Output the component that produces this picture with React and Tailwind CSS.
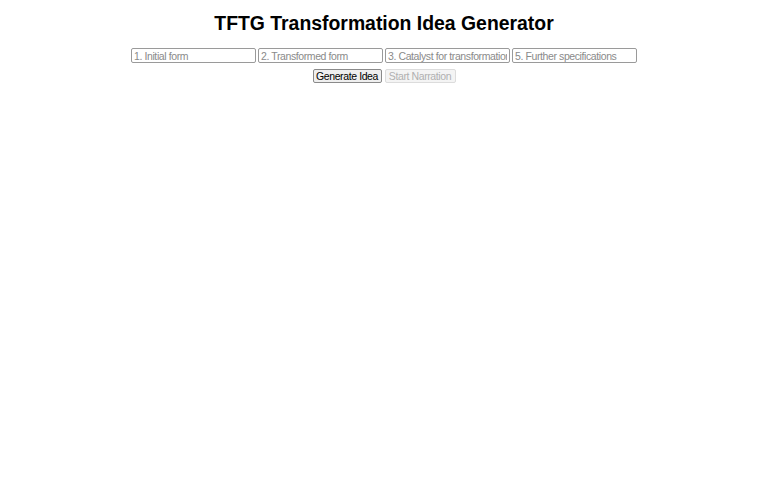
export default function App() {
  const fields = [
    "1. Initial form",
    "2. Transformed form",
    "3. Catalyst for transformation",
    "5. Further specifications",
  ];
  return (
    <div className="min-h-screen bg-white font-['Liberation_Sans',Arial,sans-serif] text-black">
      <h1 className="pt-[12px] text-center text-[19.4px] font-bold leading-[23px]">
        TFTG Transformation Idea Generator
      </h1>
      <div className="mt-[13px] flex justify-center gap-[2px]">
        {fields.map((f) => (
          <input
            key={f}
            placeholder={f}
            className="h-[15px] w-[125px] rounded-[2px] border border-[#9a9a9a] bg-white px-[2px] text-[10.5px] leading-[13px] tracking-[-0.4px] outline-none placeholder:text-[#8a8a8a]"
          />
        ))}
      </div>
      <div className="mt-[6px] flex justify-center gap-[3px]">
        <button className="h-[14px] w-[69px] whitespace-nowrap rounded-[2px] border border-[#8a8a8a] bg-[#efefef] px-0 text-[10.5px] leading-[12px] tracking-[-0.4px] text-black">
          Generate Idea
        </button>
        <button
          disabled
          className="h-[14px] w-[71px] whitespace-nowrap rounded-[2px] border border-[#dcdcdc] bg-[#f4f4f4] px-0 text-[10.5px] leading-[12px] tracking-[-0.4px] text-[#b0b0b0]"
        >
          Start Narration
        </button>
      </div>
    </div>
  );
}
